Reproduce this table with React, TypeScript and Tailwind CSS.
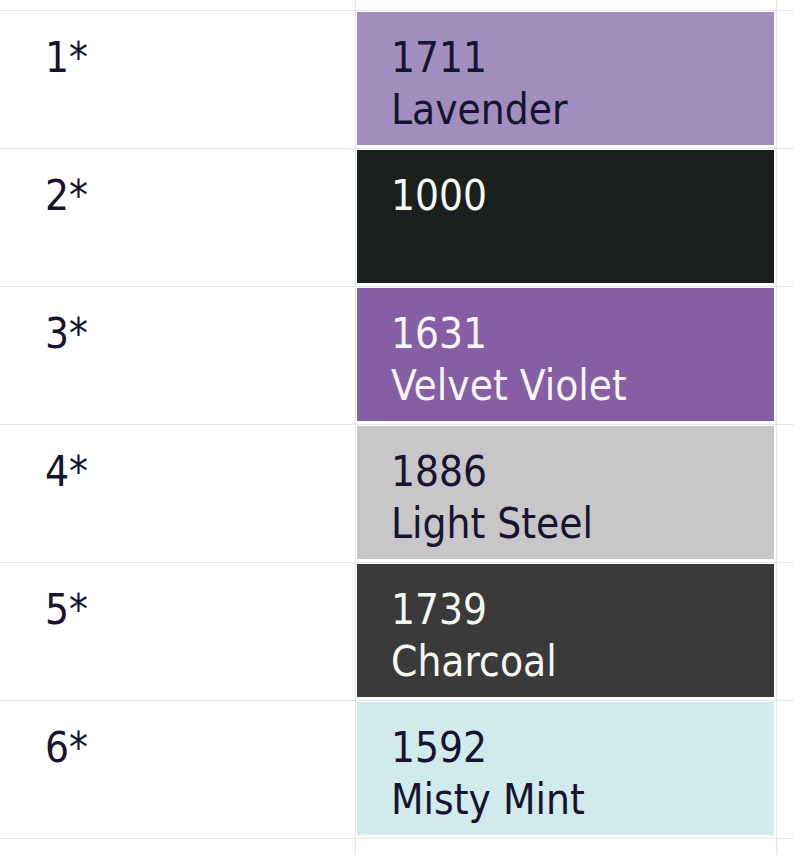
const swatches = [
  { row: "1*", code: "1711", name: "Lavender", bg: "bg-[#a18dbe]", text: "text-[#16142e]" },
  { row: "2*", code: "1000", name: "", bg: "bg-[#1b1f1e]", text: "text-[#f7f7f2]" },
  { row: "3*", code: "1631", name: "Velvet Violet", bg: "bg-[#855ea3]", text: "text-[#f7f4fa]" },
  { row: "4*", code: "1886", name: "Light Steel", bg: "bg-[#c8c6c8]", text: "text-[#16142e]" },
  { row: "5*", code: "1739", name: "Charcoal", bg: "bg-[#3a3a3a]", text: "text-[#f7f7f2]" },
  { row: "6*", code: "1592", name: "Misty Mint", bg: "bg-[#d1eaec]", text: "text-[#16142e]" }
];

const font = "font-['DejaVu_Sans_Condensed','DejaVu_Sans',sans-serif]";

export default function App() {
  return (
    <div className={`h-[855px] w-[794px] overflow-hidden bg-white ${font}`}>
      <div className="grid grid-cols-[355px_1px_420px_1px_17px]">
        <div className="h-[10px]" />
        <div className="h-[10px] bg-[#e6e6e6]" />
        <div className="h-[10px]" />
        <div className="h-[10px] bg-[#e6e6e6]" />
        <div className="h-[10px]" />
      </div>

      {swatches.map((s) => (
        <div
          key={s.row}
          className="grid h-[138px] grid-cols-[355px_1px_420px_1px_17px] border-t border-[#e6e6e6]"
        >
          <div className="pl-[45px] pt-[21px] text-[42px] leading-[52px] text-[#16142e]">
            {s.row}
          </div>
          <div className="bg-[#e6e6e6]" />
          <div className="pb-[3px] pl-[1px] pr-[2px] pt-[1px]">
            <div className={`h-[133px] pl-[34px] pt-[20px] text-[42px] leading-[52px] ${s.bg} ${s.text}`}>
              <div>{s.code}</div>
              {s.name && <div>{s.name}</div>}
            </div>
          </div>
          <div className="bg-[#e6e6e6]" />
          <div />
        </div>
      ))}

      <div className="grid h-[20px] grid-cols-[355px_1px_420px_1px_17px] border-t border-[#e6e6e6]">
        <div />
        <div className="bg-[#e6e6e6]" />
        <div />
        <div className="bg-[#e6e6e6]" />
        <div />
      </div>
    </div>
  );
}
